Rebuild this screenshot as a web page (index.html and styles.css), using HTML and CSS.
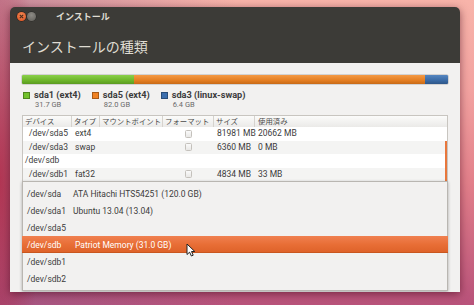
FILE: index.html
```html
<!DOCTYPE html>
<html lang="ja">
<head>
<meta charset="utf-8">
<title>インストール</title>
<link rel="stylesheet" href="styles.css">
</head>
<body>
<div class="window">
  <div class="titlebar">
    <div class="titlerow">
      <span class="wbtn close"><svg width="5" height="5" viewBox="0 0 5 5"><path d="M0.8 0.8L4.2 4.2M4.2 0.8L0.8 4.2" stroke="#4a2a1a" stroke-width="1.1"/></svg></span>
      <span class="wbtn min"></span>
      <span class="title">インストール</span>
    </div>
    <div class="heading">インストールの種類</div>
  </div>
  <div class="content">
    <div class="pbar">
      <div class="seg green" style="flex-grow:31.7"></div>
      <div class="seg orange" style="flex-grow:82.0"></div>
      <div class="seg blue" style="flex-grow:6.4"></div>
    </div>
    <div class="legend">
      <div class="litem"><span class="sq green"></span><div class="ltext"><div class="lname">sda1 (ext4)</div><div class="lsize">31.7 GB</div></div></div>
      <div class="litem"><span class="sq orange"></span><div class="ltext"><div class="lname">sda5 (ext4)</div><div class="lsize">82.0 GB</div></div></div>
      <div class="litem"><span class="sq blue"></span><div class="ltext"><div class="lname">sda3 (linux-swap)</div><div class="lsize">6.4 GB</div></div></div>
    </div>
    <div class="table">
      <div class="thead">
        <div class="th">デバイス</div>
        <div class="th">タイプ</div>
        <div class="th">マウントポイント</div>
        <div class="th">フォーマット</div>
        <div class="th">サイズ</div>
        <div class="th last">使用済み</div>
      </div>
      <div class="tbody">
        <div class="tr white"><div class="td dev sub">/dev/sda5</div><div class="td">ext4</div><div class="td"></div><div class="td chk"><span class="cb"></span></div><div class="td">81981 MB</div><div class="td">20662 MB</div></div>
        <div class="tr gray"><div class="td dev sub">/dev/sda3</div><div class="td">swap</div><div class="td"></div><div class="td chk"><span class="cb"></span></div><div class="td">6360 MB</div><div class="td">0 MB</div></div>
        <div class="tr white"><div class="td dev">/dev/sdb</div><div class="td"></div><div class="td"></div><div class="td"></div><div class="td"></div><div class="td"></div></div>
        <div class="tr gray"><div class="td dev sub">/dev/sdb1</div><div class="td">fat32</div><div class="td"></div><div class="td chk"><span class="cb"></span></div><div class="td">4834 MB</div><div class="td">33 MB</div></div>
        <div class="tr white"><div class="td dev sub"></div><div class="td"></div><div class="td"></div><div class="td chk"><span class="cb"></span></div><div class="td"></div><div class="td"></div></div>
      </div>
      <div class="scroll"></div>
    </div>
    <div class="popup">
      <div class="item"><span class="dname">/dev/sda</span><span class="ddesc">ATA Hitachi HTS54251 (120.0 GB)</span></div>
      <div class="item"><span class="dname">/dev/sda1</span><span class="ddesc">Ubuntu 13.04 (13.04)</span></div>
      <div class="item"><span class="dname">/dev/sda5</span></div>
      <div class="item sel"><span class="dname">/dev/sdb</span><span class="ddesc">Patriot Memory (31.0 GB)</span>
        <svg class="cursor" width="10" height="14" viewBox="0 0 10 14"><path d="M1 1L1 11.5L3.6 9.2L5.4 13L7.2 12.2L5.5 8.5L8.8 8.5Z" fill="#fff" stroke="#222" stroke-width="1" stroke-linejoin="round"/></svg>
      </div>
      <div class="item"><span class="dname">/dev/sdb1</span></div>
      <div class="item"><span class="dname">/dev/sdb2</span></div>
    </div>
  </div>
</div>
</body>
</html>
```
FILE: styles.css
```css
* { box-sizing: border-box; }
html, body { height: 100%; }
body {
  margin: 0;
  overflow: hidden;
  font-family: Roboto, "Noto Sans CJK JP", sans-serif;
  background:
    radial-gradient(ellipse 40px 260px at 0 180px, rgba(175,35,65,0.75), rgba(175,35,65,0) 100%),
    linear-gradient(to right, rgba(140,90,140,0.45) 0%, rgba(140,90,140,0) 50%),
    linear-gradient(to bottom, #f8b4aa 0%, #f2a2a0 30%, #e27f8a 60%, #b8527a 100%);
  padding: 7px 0 0 10px;
}
.window {
  width: 450px;
  height: 285px;
  display: flex;
  flex-direction: column;
  border-radius: 5px 5px 0 0;
  box-shadow: 0 2px 9px rgba(60,0,20,0.55);
  overflow: hidden;
}
.titlebar {
  background: #3c3b37;
  height: 56px;
  padding: 4px 12px 0 7px;
}
.titlerow {
  display: flex;
  align-items: center;
  height: 10px;
}
.wbtn {
  width: 9px;
  height: 9px;
  border-radius: 50%;
  display: flex;
  align-items: center;
  justify-content: center;
  margin-right: 1px;
}
.wbtn.close {
  background: radial-gradient(circle at 50% 35%, #f38a55, #dd4d1c);
  box-shadow: 0 0 0 0.5px #2a1a14;
}
.wbtn.min {
  background: radial-gradient(circle at 50% 35%, #8d8b85, #5f5d58);
  box-shadow: 0 0 0 0.5px #2a2a28;
}
.title {
  margin-left: 19px;
  color: #dfdbd2;
  font-size: 9px;
  font-weight: bold;
}
.heading {
  margin: 18px 0 0 5px;
  color: #dfdbd2;
  font-size: 14px;
  line-height: 16px;
}
.content {
  flex: 1;
  position: relative;
  background: #f2f1f0;
  padding: 12px 12px 0 12px;
}
.pbar {
  display: flex;
  height: 9px;
  border-radius: 1px;
  overflow: hidden;
  box-shadow: 0 0 0 0.5px rgba(0,0,0,0.25);
}
.seg { flex-basis: 0; }
.seg.green { background: linear-gradient(#8bd04a, #6db52a 60%, #5a9a20); }
.seg.orange { background: linear-gradient(#f49a45, #e47e22 60%, #c86a16); }
.seg.blue { background: linear-gradient(#5686c0, #3a6aa5 60%, #2e5688); }
.legend {
  display: flex;
  gap: 11px;
  margin-top: 6px;
  padding-left: 1px;
}
.litem { display: flex; align-items: flex-start; }
.sq {
  width: 7px;
  height: 7px;
  margin-top: 2px;
  margin-right: 4px;
  border: 1px solid rgba(0,0,0,0.3);
}
.sq.green { background: #72c12c; }
.sq.orange { background: #f08222; }
.sq.blue { background: #3c6fae; }
.ltext { display: flex; flex-direction: column; }
.lname {
  font-size: 9.2px;
  font-weight: bold;
  color: #3c3c3c;
  line-height: 10px;
}
.lsize {
  font-size: 7.5px;
  color: #6a6a6a;
  line-height: 9px;
  padding-left: 1px;
}
.table {
  position: relative;
  margin-top: 6px;
  height: 70px;
  overflow: hidden;
  border: 1px solid #c8c5c0;
  border-bottom: none;
  background: #fff;
}
.thead, .tr {
  display: grid;
  grid-template-columns: 49px 28px 63px 51px 41px 1fr;
}
.thead {
  height: 12px;
  background: linear-gradient(#fbfbfa, #ebeae8);
  border-bottom: 1px solid #d0cdc8;
}
.th {
  font-size: 7.4px;
  line-height: 12px;
  color: #4a4a4a;
  padding-left: 2px;
  border-right: 1px solid #d6d3ce;
  white-space: nowrap;
  overflow: hidden;
}
.th.last { border-right: none; padding-left: 3px; }
.tbody { margin-top: -1px; }
.tr { height: 13.5px; }
.tr.white { background: #ffffff; }
.tr.gray { background: #f4f4f3; }
.td {
  font-size: 8.5px;
  line-height: 13.5px;
  color: #3c3c3c;
  padding-left: 3px;
  white-space: nowrap;
}
.td.dev { padding-left: 2px; }
.td.dev.sub { padding-left: 6px; }
.td.chk { display: flex; align-items: center; justify-content: center; padding-left: 0; }
.cb {
  width: 7px;
  height: 8px;
  border: 1px solid #c4c1bc;
  border-radius: 1.5px;
  background: linear-gradient(#fafafa, #e9e8e6);
}
.scroll {
  position: absolute;
  right: 0;
  top: 25px;
  width: 2px;
  height: 45px;
  background: #e8773c;
}
.popup {
  position: absolute;
  left: 12px;
  right: 12px;
  top: 118px;
  height: 110px;
  background: #f2f1f0;
  border: 1px solid #b9b6b1;
  box-shadow: 0 1px 3px rgba(0,0,0,0.3);
  padding-top: 3px;
}
.item {
  position: relative;
  display: flex;
  height: 17px;
  align-items: center;
  font-size: 8.5px;
  color: #3c3c3c;
  padding-left: 4px;
  white-space: nowrap;
}
.dname { width: 46px; flex-shrink: 0; }
.item.sel {
  background: linear-gradient(#f08050, #e86e36 50%, #dd6128);
  color: #fff;
  box-shadow: inset 0 -1px 0 #c9561f;
  margin: 0 -1px;
  padding-left: 5px;
}
.item.sel .ddesc { margin-left: 2px; }
.cursor {
  position: absolute;
  left: 164px;
  top: 7px;
}
```
